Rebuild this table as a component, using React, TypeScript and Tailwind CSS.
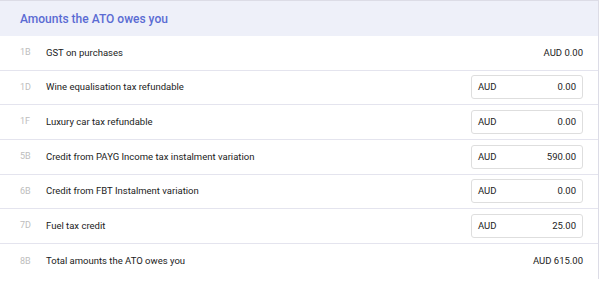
type Line = {
  code: string;
  label: string;
  amount: string;
  editable?: boolean;
};

const lines: Line[] = [
  { code: '1B', label: 'GST on purchases', amount: '0.00' },
  { code: '1D', label: 'Wine equalisation tax refundable', amount: '0.00', editable: true },
  { code: '1F', label: 'Luxury car tax refundable', amount: '0.00', editable: true },
  { code: '5B', label: 'Credit from PAYG Income tax instalment variation', amount: '590.00', editable: true },
  { code: '6B', label: 'Credit from FBT Instalment variation', amount: '0.00', editable: true },
  { code: '7D', label: 'Fuel tax credit', amount: '25.00', editable: true },
  { code: '8B', label: 'Total amounts the ATO owes you', amount: '615.00' },
];

export default function App() {
  return (
    <div className="h-[283px] w-[600px] bg-white font-['Roboto',sans-serif]">
      <div className="w-[599px] border-t border-r border-[#dcdce6]">
        <div className="flex h-[35px] items-center bg-[#eef0f9] pl-5">
          <h2 className="text-[12px] font-medium text-[#5a6bd3]">Amounts the ATO owes you</h2>
        </div>

        {lines.map((l, i) => (
          <div
            key={l.code}
            className={`flex h-[34.67px] items-center pl-5 pr-[15px] ${
              i < lines.length - 1 ? 'border-b-[1.5px] border-[#e4e4ee]' : ''
            }`}
          >
            <span className="w-[26px] text-[9px] text-[#bdbdbd]">{l.code}</span>
            <span className="flex-1 text-[9.5px] text-[#222]">{l.label}</span>
            {l.editable ? (
              <div className="flex h-[24px] w-[112px] items-center justify-between rounded-[3px] border border-[#dedede] bg-white px-[6px] text-[9.5px] text-[#222]">
                <span>AUD</span>
                <span>{l.amount}</span>
              </div>
            ) : (
              <span className="text-[9.5px] text-[#222]">AUD {l.amount}</span>
            )}
          </div>
        ))}
      </div>
    </div>
  );
}
